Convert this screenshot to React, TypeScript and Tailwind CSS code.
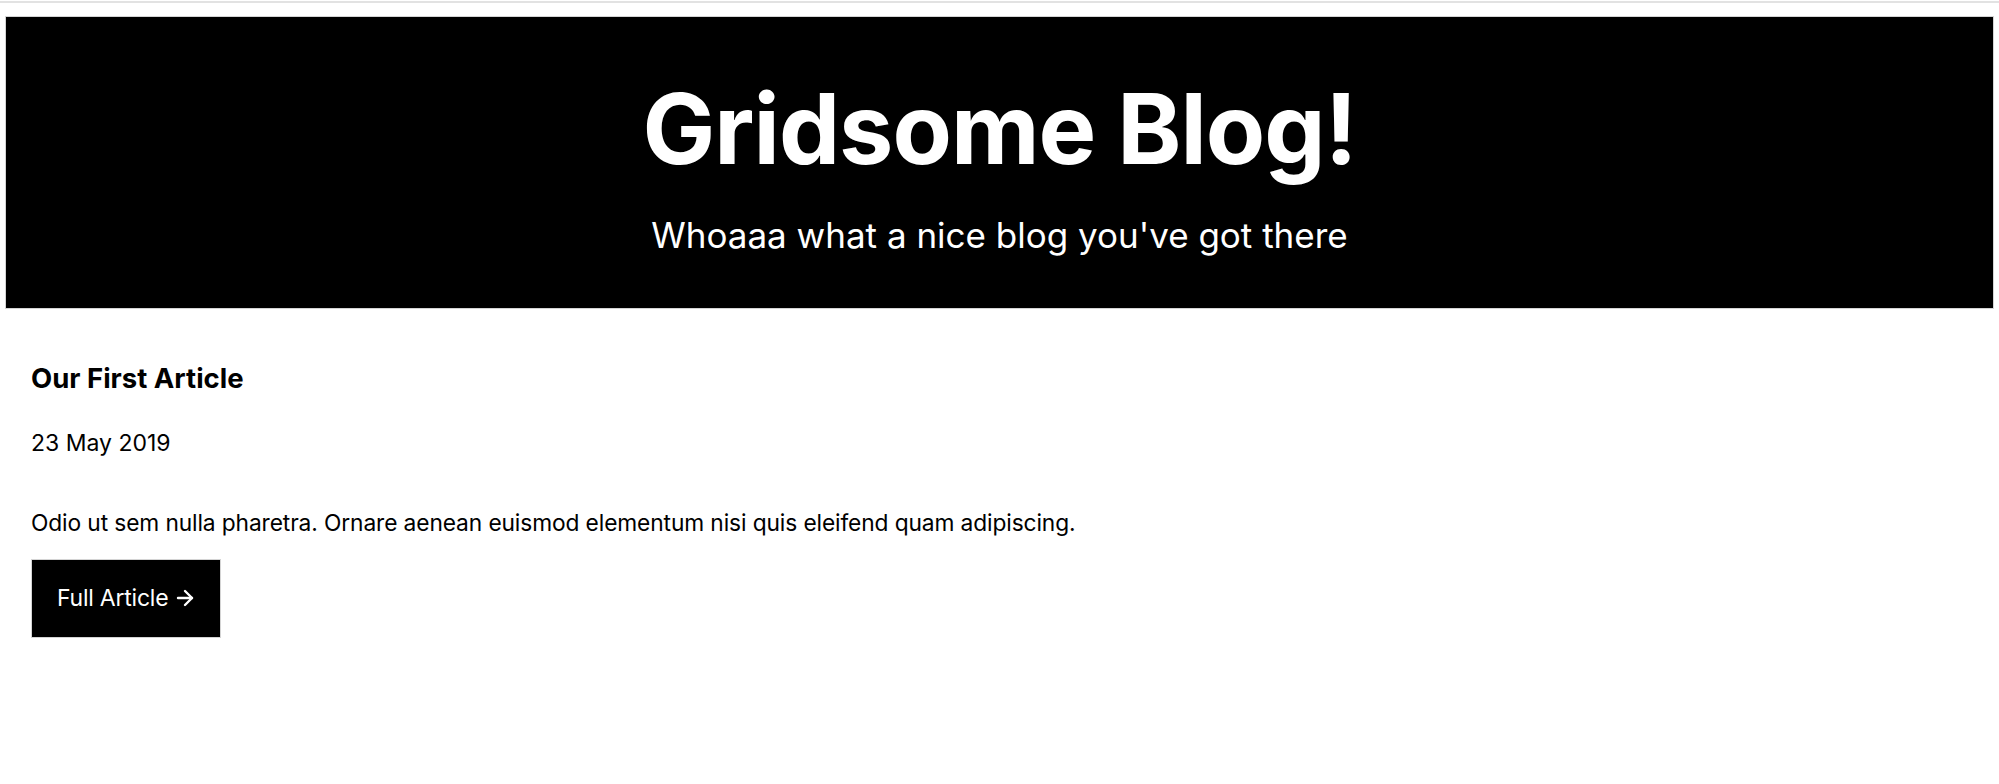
import { ArrowRight } from 'lucide-react';

const post = {
  title: 'Our First Article',
  date: '23 May 2019',
  excerpt:
    'Odio ut sem nulla pharetra. Ornare aenean euismod elementum nisi quis eleifend quam adipiscing.',
};

function Hero() {
  return (
    <header className="mx-[5px] mt-[12px] border border-[#d4d4d4] bg-black text-white flex flex-col items-center pt-[54px] pb-[52px]">
      <h1 className="text-[97px] font-bold leading-[1.2] tracking-[-0.01em]">Gridsome Blog!</h1>
      <p className="mt-[27px] text-[35px] leading-[1.2]">Whoaaa what a nice blog you've got there</p>
    </header>
  );
}

function PostCard() {
  return (
    <article className="px-[31px] pt-[52px]">
      <h2 className="text-[27.5px] font-bold leading-[1.3]">{post.title}</h2>
      <p className="mt-[32px] text-[23px] leading-[1.3]">{post.date}</p>
      <p className="mt-[48px] text-[22.75px] tracking-[-0.005em] leading-[1.4]">{post.excerpt}</p>
      <a
        href="#"
        className="mt-[20px] inline-flex items-center gap-[5px] bg-black text-white border border-[#d4d4d4] pl-[25px] pr-[23px] h-[79px] text-[23px] tracking-[-0.01em]"
      >
        Full Article
        <ArrowRight size={24} strokeWidth={2.4} />
      </a>
    </article>
  );
}

export default function App() {
  return (
    <div className="min-h-[784px] bg-white text-black font-['Inter',sans-serif]">
      <div className="h-[3px] border-t-[2px] border-[#e2e2e2] mt-[1px]" />
      <Hero />
      <PostCard />
    </div>
  );
}
